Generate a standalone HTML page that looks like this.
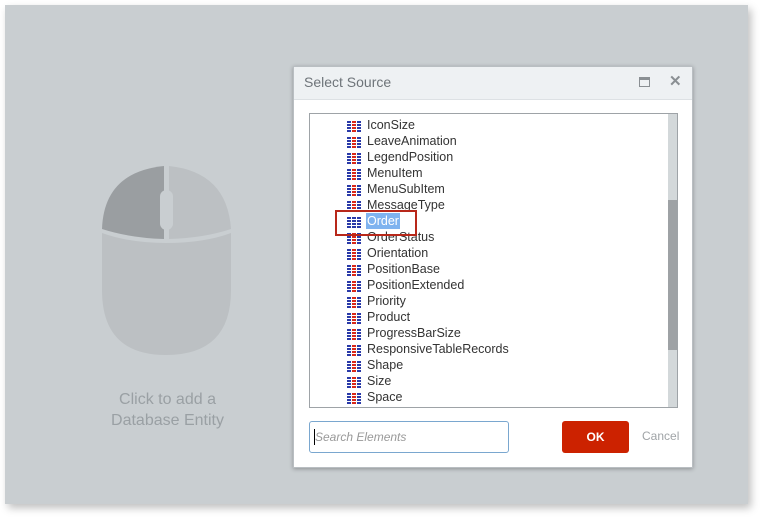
<!DOCTYPE html>
<html><head><meta charset="utf-8"><style>
*{margin:0;padding:0;box-sizing:border-box}
body{width:763px;height:519px;background:#fff;position:relative;overflow:hidden;font-family:"Segoe UI","Liberation Sans",sans-serif}
.bg{position:absolute;left:5px;top:5px;width:743px;height:499px;background:#c9ced1;box-shadow:3px 4px 8px rgba(0,0,0,.25)}
.cap{position:absolute;left:80px;width:175px;text-align:center;top:389px;color:#9aa0a4;font-size:16px;line-height:21px}
.dlg{position:absolute;left:293px;top:66px;width:400px;height:402px;background:#fff;border:1px solid #b9bec2;box-shadow:0 1px 4px rgba(0,0,0,.3)}
.tb{height:33px;background:#eef1f3;border-bottom:1px solid #dde1e4;position:relative}
.tb .t{position:absolute;left:10px;top:7px;font-size:14px;color:#6e7479}
.max{position:absolute;left:345px;top:10px;width:11px;height:10px;border:1px solid #8a8f93;border-top-width:3px}
.x{position:absolute;left:375px;top:5px;font-size:15px;font-weight:bold;color:#8a8f93}
.list{position:absolute;left:15px;top:46px;width:369px;height:295px;border:1px solid #9ea3a7;overflow:hidden}
.sb{position:absolute;right:0;top:0;width:9px;height:100%;background:#d3d8da}
.th{position:absolute;right:0;top:86px;width:9px;height:150px;background:#9ea2a5}
.row{position:absolute;left:37px;height:16px;font-size:12.5px;color:#333;line-height:16px}
.ic{position:absolute;left:0;top:3px;width:14px;height:11px}
.row span{position:absolute;left:20px;top:-1px;white-space:nowrap}
.sel span{background:#7fb3ef;color:#fff;padding:0 1px;left:19px}
.red{position:absolute;left:25px;top:96px;width:82px;height:26px;border:2px solid #b8281a}
.search{position:absolute;left:15px;top:354px;width:200px;height:32px;border:1px solid #7aa7cf;border-radius:3px;font-size:12px;font-style:italic;color:#999;padding:8px 0 0 5px}
.search:before{content:"";position:absolute;left:4px;top:7px;width:1px;height:16px;background:#000}
.ok{position:absolute;left:268px;top:354px;width:67px;height:32px;background:#cc2200;border-radius:3px;color:#fff;font-weight:bold;font-size:12px;text-align:center;line-height:32px}
.cancel{position:absolute;left:348px;top:362px;font-size:12px;color:#a0a4a7}
</style></head><body>
<div class="bg"></div>
<svg style="position:absolute;left:90px;top:150px" width="160" height="220" viewBox="0 0 160 220">
<path d="M12 79 Q14 22 74 16 L74 89 Q40 88 12 79Z" fill="#9a9ea1"/>
<path d="M79 16 Q137 22 141 79 Q114 88 79 89Z" fill="#bcc0c3"/>
<path d="M12 83 Q40 93 76 93 Q114 93 141 83 L141 140 Q141 205 76 205 Q12 205 12 140Z" fill="#bcc0c3"/>
<rect x="70" y="40" width="13" height="40" rx="6.5" fill="#c9ced1"/>
</svg>
<div class="cap">Click to add a<br>Database Entity</div>
<div class="dlg">
<div class="tb"><div class="t">Select Source</div><div class="max"></div><div class="x">✕</div></div>
<div class="list">
<div class="sb"><div class="th"></div></div>
<div id="rows"></div>
<div class="red"></div>
</div>
<div class="search">Search Elements</div>
<div class="ok">OK</div>
<div class="cancel">Cancel</div>
</div>
<script>
var n=["IconSize","LeaveAnimation","LegendPosition","MenuItem","MenuSubItem","MessageType","Order","OrderStatus","Orientation","PositionBase","PositionExtended","Priority","Product","ProgressBarSize","ResponsiveTableRecords","Shape","Size","Space",""];
var h="";
n.forEach(function(s,i){
var sel=s=="Order",mid=sel?"#2a3aa8":"#d8281a";
var ic='<svg class="ic" viewBox="0 0 14 11">';
for(var r=0;r<4;r++){ic+='<rect x="0" y="'+r*3+'" width="4" height="2" fill="#2a3aa8"/><rect x="5" y="'+r*3+'" width="4" height="2" fill="'+mid+'"/><rect x="10" y="'+r*3+'" width="4" height="2" fill="#2a3aa8"/>';}
ic+='</svg>';
h+='<div class="row'+(sel?' sel':'')+'" style="top:'+(4+i*16)+'px">'+ic+'<span>'+s+'</span></div>';
});
document.getElementById("rows").innerHTML=h;
</script>
</body></html>
